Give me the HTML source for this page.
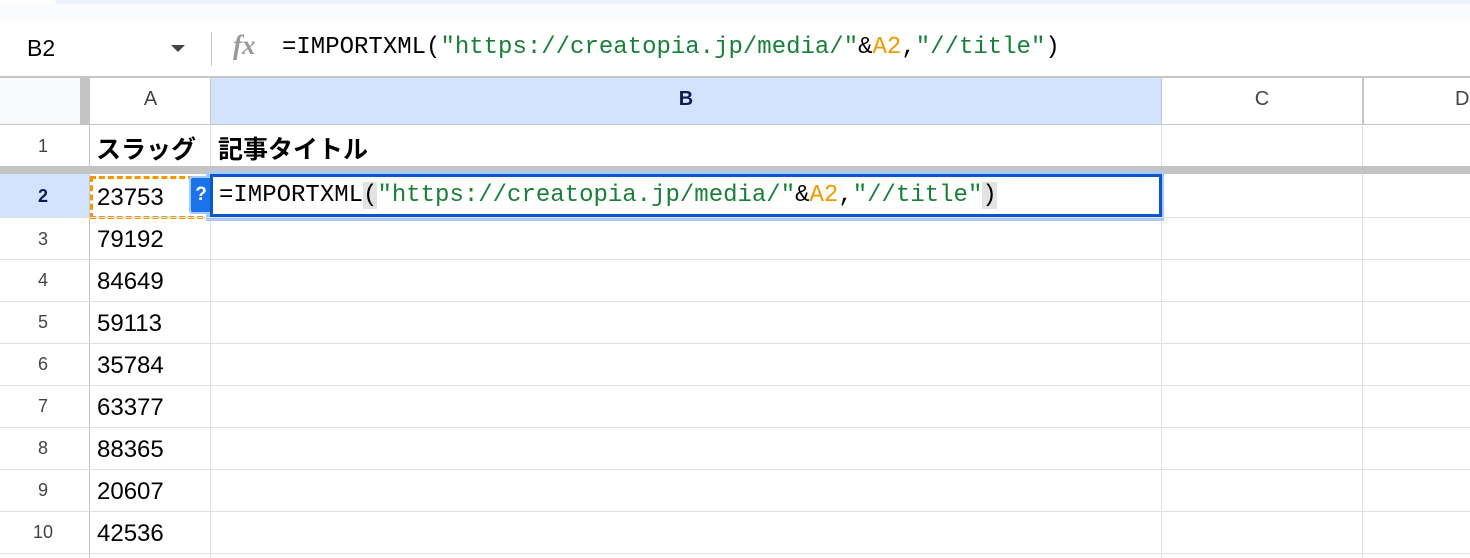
<!DOCTYPE html>
<html><head><meta charset="utf-8"><style>
body{margin:0;width:1470px;height:558px;overflow:hidden;background:#fff;font-family:"Liberation Sans","Noto Sans CJK JP",sans-serif;position:relative}
.a{position:absolute}
.mono{font-family:"Liberation Mono",monospace;font-size:24px;letter-spacing:0;white-space:nowrap}
.g{color:#188038}.o{color:#f29900}
.hl{background:#e3e3e3}
.rn{position:absolute;left:0;width:86px;text-align:center;color:#444;font-size:18px}
.cell{position:absolute;left:97px;font-size:24px;color:#000}
.hline{position:absolute;left:0;width:1470px;height:1px;background:#e1e1e1}
</style></head><body>
<div class="a" style="left:0;top:0;width:1470px;height:4px;background:#fff"></div>
<div class="a" style="left:55px;top:0;width:1415px;height:4px;background:#edf2fa;border-radius:0 0 0 12px"></div>
<div class="a" style="left:0;top:4px;width:1470px;height:16px;background:#f9fbfd"></div>
<!-- formula bar -->
<div class="a" style="left:27px;top:35px;font-size:23px;color:#000">B2</div>
<div class="a" style="left:171px;top:45px;width:0;height:0;border-left:7px solid transparent;border-right:7px solid transparent;border-top:7px solid #444"></div>
<div class="a" style="left:211px;top:32px;width:1px;height:34px;background:#c7c7c7"></div>
<div class="a" style="left:233px;top:30px;font-family:'Liberation Serif',serif;font-style:italic;font-weight:bold;font-size:27px;color:#999">fx</div>
<div class="a mono" style="left:282px;top:34px">=IMPORTXML(<span class="g">"https://creatopia.jp/media/"</span>&amp;<span class="o">A2</span>,<span class="g">"//title"</span>)</div>
<!-- column headers -->
<div class="a" style="left:0;top:76px;width:1470px;height:2px;background:#c4c7c5"></div>
<div class="a" style="left:0;top:78px;width:80px;height:46px;background:#f8f9fa"></div>
<div class="a" style="left:80px;top:78px;width:9px;height:46px;background:#c4c4c4"></div>
<div class="a" style="left:89px;top:78px;width:1px;height:480px;background:#c4c7c5"></div>
<div class="a" style="left:211px;top:78px;width:950px;height:46px;background:#d3e3fd"></div>
<div class="a" style="left:0;top:124px;width:1470px;height:1px;background:#c4c7c5"></div>
<div class="a" style="left:90px;top:88px;width:121px;text-align:center;font-size:20px;color:#444">A</div>
<div class="a" style="left:211px;top:88px;width:950px;text-align:center;font-size:20px;color:#0b1e4f;font-weight:bold">B</div>
<div class="a" style="left:1162px;top:88px;width:200px;text-align:center;font-size:20px;color:#444">C</div>
<div class="a" style="left:1455px;top:88px;font-size:20px;color:#444">D</div>
<div class="a" style="left:210px;top:78px;width:1px;height:480px;background:#e1e1e1"></div>
<div class="a" style="left:1161px;top:78px;width:1px;height:480px;background:#e1e1e1"></div>
<div class="a" style="left:1362px;top:78px;width:1px;height:480px;background:#e1e1e1"></div>
<div class="a" style="left:210px;top:78px;width:1px;height:46px;background:#c4c7c5"></div>
<div class="a" style="left:1161px;top:78px;width:1px;height:46px;background:#c4c7c5"></div>
<div class="a" style="left:1362px;top:78px;width:2px;height:46px;background:#c4c7c5"></div>
<!-- row 1 -->
<div class="rn" style="top:136px">1</div>
<div class="a" style="left:96px;top:130px;font-size:25px;font-weight:bold">スラッグ</div>
<div class="a" style="left:218px;top:130px;font-size:25px;font-weight:bold">記事タイトル</div>
<!-- freeze bar -->
<div class="a" style="left:0;top:166px;width:1470px;height:8px;background:#c4c4c4"></div>
<!-- row 2 -->
<div class="a" style="left:0;top:174px;width:89px;height:43px;background:#d3e3fd"></div>
<div class="rn" style="top:186px;color:#0b1e4f;font-weight:bold">2</div>
<div class="a" style="left:90px;top:176px;width:116px;height:37px;border:3px dashed #f29900"></div>
<div class="cell" style="top:184px">23753</div>
<div class="a" style="left:206px;top:171px;width:958px;height:50px;background:#a8c7fa"></div>
<div class="a" style="left:189px;top:176px;width:24px;height:38px;background:#a8c7fa;border-radius:3px"></div>
<div class="a" style="left:191px;top:178px;width:20px;height:34px;background:#1a73e8;color:#fff;font-weight:bold;font-size:19px;text-align:center;line-height:34px;border-radius:2px">?</div>
<div class="a" style="left:210px;top:174px;width:946px;height:37px;border:3px solid #0b57d0;background:#fff"></div>
<div class="a mono" style="left:219px;top:182px">=IMPORTXML<span class="hl">(</span><span class="g">"https://creatopia.jp/media/"</span>&amp;<span class="o">A2</span>,<span class="g">"//title"</span><span class="hl">)</span></div>
<!-- rows 3-10 -->
<div class="hline" style="top:217px"></div>
<div class="hline" style="top:259px"></div>
<div class="hline" style="top:301px"></div>
<div class="hline" style="top:343px"></div>
<div class="hline" style="top:385px"></div>
<div class="hline" style="top:427px"></div>
<div class="hline" style="top:469px"></div>
<div class="hline" style="top:511px"></div>
<div class="hline" style="top:553px"></div>
<div class="rn" style="top:229px">3</div><div class="cell" style="top:226px">79192</div>
<div class="rn" style="top:270px">4</div><div class="cell" style="top:268px">84649</div>
<div class="rn" style="top:312px">5</div><div class="cell" style="top:310px">59113</div>
<div class="rn" style="top:354px">6</div><div class="cell" style="top:352px">35784</div>
<div class="rn" style="top:396px">7</div><div class="cell" style="top:394px">63377</div>
<div class="rn" style="top:438px">8</div><div class="cell" style="top:436px">88365</div>
<div class="rn" style="top:480px">9</div><div class="cell" style="top:478px">20607</div>
<div class="rn" style="top:522px">10</div><div class="cell" style="top:520px">42536</div>
</body></html>
